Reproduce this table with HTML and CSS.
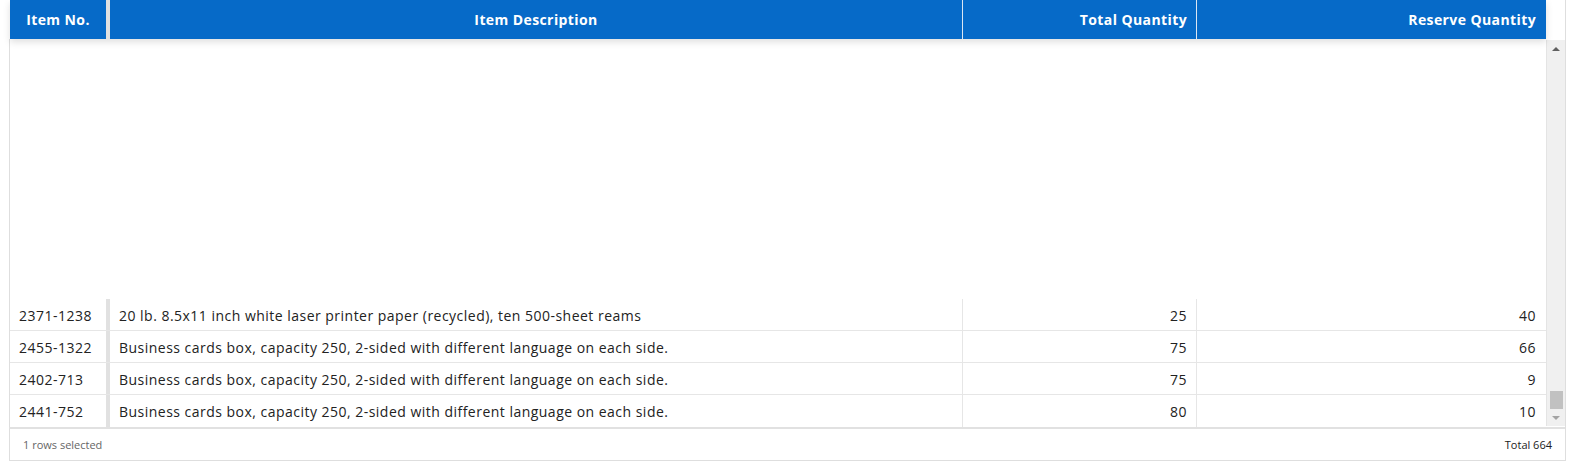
FILE: index.html
```html
<!DOCTYPE html>
<html>
<head>
<meta charset="utf-8">
<link rel="stylesheet" href="styles.css">
</head>
<body>
<div class="grid">
  <div class="main">
    <div class="table">
      <div class="head">
        <div class="hcell c1 center">Item No.</div>
        <div class="divider hdiv"></div>
        <div class="hcell c2 center">Item Description</div>
        <div class="hcell c3 right">Total Quantity</div>
        <div class="hcell c4 right last">Reserve Quantity</div>
      </div>
      <div class="body">
        <div class="rows">
          <div class="row">
            <div class="cell c1">2371-1238</div>
            <div class="divider"></div>
            <div class="cell c2">20 lb. 8.5x11 inch white laser printer paper (recycled), ten 500-sheet reams</div>
            <div class="cell c3 right">25</div>
            <div class="cell c4 right last">40</div>
          </div>
          <div class="row">
            <div class="cell c1">2455-1322</div>
            <div class="divider"></div>
            <div class="cell c2">Business cards box, capacity 250, 2-sided with different language on each side.</div>
            <div class="cell c3 right">75</div>
            <div class="cell c4 right last">66</div>
          </div>
          <div class="row">
            <div class="cell c1">2402-713</div>
            <div class="divider"></div>
            <div class="cell c2">Business cards box, capacity 250, 2-sided with different language on each side.</div>
            <div class="cell c3 right">75</div>
            <div class="cell c4 right last">9</div>
          </div>
          <div class="row">
            <div class="cell c1">2441-752</div>
            <div class="divider"></div>
            <div class="cell c2">Business cards box, capacity 250, 2-sided with different language on each side.</div>
            <div class="cell c3 right">80</div>
            <div class="cell c4 right last">10</div>
          </div>
        </div>
      </div>
    </div>
    <div class="side">
      <div class="side-top"></div>
      <div class="vscroll">
        <div class="arrow up"></div>
        <div class="track"><div class="thumb"></div></div>
        <div class="arrow down"></div>
      </div>
    </div>
  </div>
  <div class="footer">
    <span class="sel">1 rows selected</span>
    <span class="total">Total 664</span>
  </div>
</div>
</body>
</html>
```

FILE: styles.css
```css
html, body {
  margin: 0;
  padding: 0;
  background: #ffffff;
}
body {
  font-family: "Open Sans", "Noto Sans", sans-serif;
  font-size: 14px;
  letter-spacing: 0.4px;
  color: #222;
}
.grid {
  margin-left: 9px;
  width: 1556px;
  border-right: 1px solid #dedede;
}
.main {
  display: flex;
}
.table {
  width: 1537px;
  display: flex;
  flex-direction: column;
}
.head {
  display: flex;
  height: 39px;
  margin-left: 1px;
  background: #066ac8;
  color: #fff;
  font-weight: 700;
  position: relative;
  z-index: 1;
  box-shadow: 0 3px 7px rgba(0, 0, 0, 0.13);
}
.hcell {
  display: flex;
  align-items: center;
  padding: 0 9px;
  box-sizing: border-box;
  border-right: 1px solid #dbe6f3;
  white-space: nowrap;
}
.hcell.center { justify-content: center; }
.hcell.right { justify-content: flex-end; }
.hcell.c1 { border-right: none; }
.hcell.last { border-right: none; padding-right: 10px; }
.c1 { width: 96px; flex: none; }
.c2 { width: 853px; flex: none; }
.c3 { width: 234px; flex: none; }
.c4 { flex: 1; }
.divider {
  width: 4px;
  flex: none;
  background: #e1e1e1;
}
.hdiv { background: #e1e1e1; }
.body {
  height: 388px;
  border-left: 1px solid #dedede;
  display: flex;
  flex-direction: column;
  justify-content: flex-end;
}
.rows {
  display: flex;
  flex-direction: column;
}
.row {
  display: flex;
  height: 32px;
  border-bottom: 1px solid #e6e6e6;
  box-sizing: border-box;
}
.row:last-child { border-bottom: none; }
.cell {
  display: flex;
  align-items: center;
  padding: 1px 9px 0;
  box-sizing: border-box;
  border-right: 1px solid #e6e6e6;
  white-space: nowrap;
  color: #222;
  letter-spacing: 0.48px;
}
.cell.c1 { border-right: none; }
.cell.right { justify-content: flex-end; }
.cell.last { border-right: none; padding-right: 10px; }
.side {
  width: 19px;
  display: flex;
  flex-direction: column;
}
.side-top {
  height: 40px;
  flex: none;
}
.vscroll {
  height: 386px;
  background: #f0f0f0;
  border-left: 1px solid #e4e4e4;
  display: flex;
  flex-direction: column;
  align-items: center;
  box-sizing: border-box;
}
.arrow {
  height: 17px;
  width: 100%;
  flex: none;
  display: flex;
  align-items: center;
  justify-content: center;
}
.arrow.up::before {
  content: "";
  border-left: 4px solid transparent;
  border-right: 4px solid transparent;
  border-bottom: 4px solid #606060;
}
.arrow.down::before {
  content: "";
  border-left: 4px solid transparent;
  border-right: 4px solid transparent;
  border-top: 4px solid #a3a3a3;
}
.track {
  flex: 1;
  width: 100%;
  display: flex;
  flex-direction: column;
  justify-content: flex-end;
  align-items: center;
}
.thumb {
  width: 13px;
  height: 18px;
  background: #c1c1c1;
}
.footer {
  display: flex;
  justify-content: space-between;
  align-items: center;
  height: 34px;
  box-sizing: border-box;
  border-top: 2px solid #e1e1e1;
  border-bottom: 1px solid #dedede;
  border-left: 1px solid #dedede;
  padding: 0 13px;
  font-size: 11px;
  letter-spacing: 0;
}
.sel { color: #666; }
.total { color: #222; }
```
